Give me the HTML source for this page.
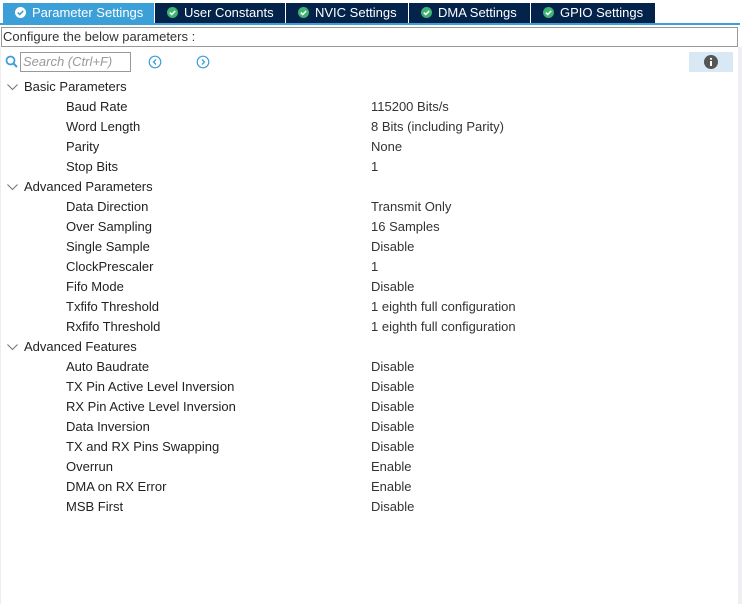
<!DOCTYPE html>
<html><head><meta charset="utf-8"><style>
*{margin:0;padding:0;box-sizing:border-box}
body{width:742px;height:604px;background:#fff;font-family:"Liberation Sans",Arial,sans-serif;font-size:13px;color:#222;position:relative;overflow:hidden}
.tab{position:absolute;top:3px;height:20px;background:#03234b;color:#fff;font-size:13px;line-height:20px;padding-left:12px;white-space:nowrap}
.tab.a{background:#3ca0d8}
.tab svg{vertical-align:-1px;margin-right:6px}
.bl{position:absolute;left:0;top:23px;width:740px;height:2px;background:#3ca0d8}
.cfg{position:absolute;left:1px;top:27px;width:737px;height:20px;border:1px solid #999;line-height:18px;padding-left:1px;color:#333}
.srch{position:absolute;left:20px;top:52px;width:111px;height:20px;border:1px solid #999;font-style:italic;color:#999;line-height:18px;padding-left:2px}
.info{position:absolute;left:689px;top:52px;width:44px;height:20px;background:#d8e8f5}
.lstrip{position:absolute;left:0;top:47px;width:1px;height:557px;background:#eee}
.rstrip{position:absolute;left:738px;top:47px;width:4px;height:557px;background:#eeeff2}
.row{position:absolute;height:20px;line-height:20px;white-space:nowrap}
.g{left:24px}
.n{left:66px}
.v{left:371px}
.chev{position:absolute;left:7px}
</style></head><body>
<div class="tab a" style="left:3px;width:151px"><svg width="11" height="11" viewBox="0 0 11 11"><circle cx="5.5" cy="5.5" r="5.5" fill="#fff"/><path d="M2.8 5.6l1.9 1.9 3.5-3.6" stroke="#3ca0d8" stroke-width="1.6" fill="none"/></svg>Parameter Settings</div>
<div class="tab" style="left:155px;width:130px"><svg width="11" height="11" viewBox="0 0 11 11"><circle cx="5.5" cy="5.5" r="5.5" fill="#3cb371"/><path d="M2.8 5.6l1.9 1.9 3.5-3.6" stroke="#fff" stroke-width="1.6" fill="none"/></svg>User Constants</div>
<div class="tab" style="left:286px;width:122px"><svg width="11" height="11" viewBox="0 0 11 11"><circle cx="5.5" cy="5.5" r="5.5" fill="#3cb371"/><path d="M2.8 5.6l1.9 1.9 3.5-3.6" stroke="#fff" stroke-width="1.6" fill="none"/></svg>NVIC Settings</div>
<div class="tab" style="left:409px;width:121px"><svg width="11" height="11" viewBox="0 0 11 11"><circle cx="5.5" cy="5.5" r="5.5" fill="#3cb371"/><path d="M2.8 5.6l1.9 1.9 3.5-3.6" stroke="#fff" stroke-width="1.6" fill="none"/></svg>DMA Settings</div>
<div class="tab" style="left:531px;width:124px"><svg width="11" height="11" viewBox="0 0 11 11"><circle cx="5.5" cy="5.5" r="5.5" fill="#3cb371"/><path d="M2.8 5.6l1.9 1.9 3.5-3.6" stroke="#fff" stroke-width="1.6" fill="none"/></svg>GPIO Settings</div>
<div class="bl"></div>
<div class="cfg">Configure the below parameters :</div>
<div class="lstrip"></div><div class="rstrip"></div>
<svg style="position:absolute;left:5px;top:55px" width="14" height="14" viewBox="0 0 14 14"><circle cx="5.5" cy="5.5" r="4" stroke="#3ca0d8" stroke-width="1.8" fill="none"/><path d="M8.5 8.5l3.5 3.5" stroke="#3ca0d8" stroke-width="2"/></svg>
<div class="srch">Search (Ctrl+F)</div>
<svg style="position:absolute;left:148px;top:55px" width="14" height="14" viewBox="0 0 14 14"><circle cx="7" cy="7" r="5.8" stroke="#3ca0d8" stroke-width="1.2" fill="none"/><path d="M8 4.5L5.5 7 8 9.5" stroke="#3ca0d8" stroke-width="1.3" fill="none"/></svg>
<svg style="position:absolute;left:196px;top:55px" width="14" height="14" viewBox="0 0 14 14"><circle cx="7" cy="7" r="5.8" stroke="#3ca0d8" stroke-width="1.2" fill="none"/><path d="M6 4.5L8.5 7 6 9.5" stroke="#3ca0d8" stroke-width="1.3" fill="none"/></svg>
<div class="info"><svg style="position:absolute;left:15px;top:3px" width="14" height="14" viewBox="0 0 14 14"><circle cx="7" cy="7" r="7" fill="#555"/><rect x="6" y="6" width="2" height="5" fill="#fff"/><circle cx="7" cy="3.8" r="1.1" fill="#fff"/></svg></div>
<div id="rows"></div>
<script>
var d=[["g","Basic Parameters"],["Baud Rate","115200 Bits/s"],["Word Length","8 Bits (including Parity)"],["Parity","None"],["Stop Bits","1"],
["g","Advanced Parameters"],["Data Direction","Transmit Only"],["Over Sampling","16 Samples"],["Single Sample","Disable"],["ClockPrescaler","1"],["Fifo Mode","Disable"],["Txfifo Threshold","1 eighth full configuration"],["Rxfifo Threshold","1 eighth full configuration"],
["g","Advanced Features"],["Auto Baudrate","Disable"],["TX Pin Active Level Inversion","Disable"],["RX Pin Active Level Inversion","Disable"],["Data Inversion","Disable"],["TX and RX Pins Swapping","Disable"],["Overrun","Enable"],["DMA on RX Error","Enable"],["MSB First","Disable"]];
var h="";d.forEach(function(r,i){var t=77+i*20;
if(r[0]=="g"){h+='<svg class="chev" style="top:'+(t+7)+'px" width="11" height="7" viewBox="0 0 11 7"><path d="M0.5 0.5L5.5 5.5 10.5 0.5" stroke="#777" stroke-width="1.1" fill="none"/></svg><div class="row g" style="top:'+t+'px">'+r[1]+'</div>';}
else{h+='<div class="row n" style="top:'+t+'px">'+r[0]+'</div><div class="row v" style="top:'+t+'px;color:#333">'+r[1]+'</div>';}});
document.getElementById("rows").innerHTML=h;
</script>
</body></html>
